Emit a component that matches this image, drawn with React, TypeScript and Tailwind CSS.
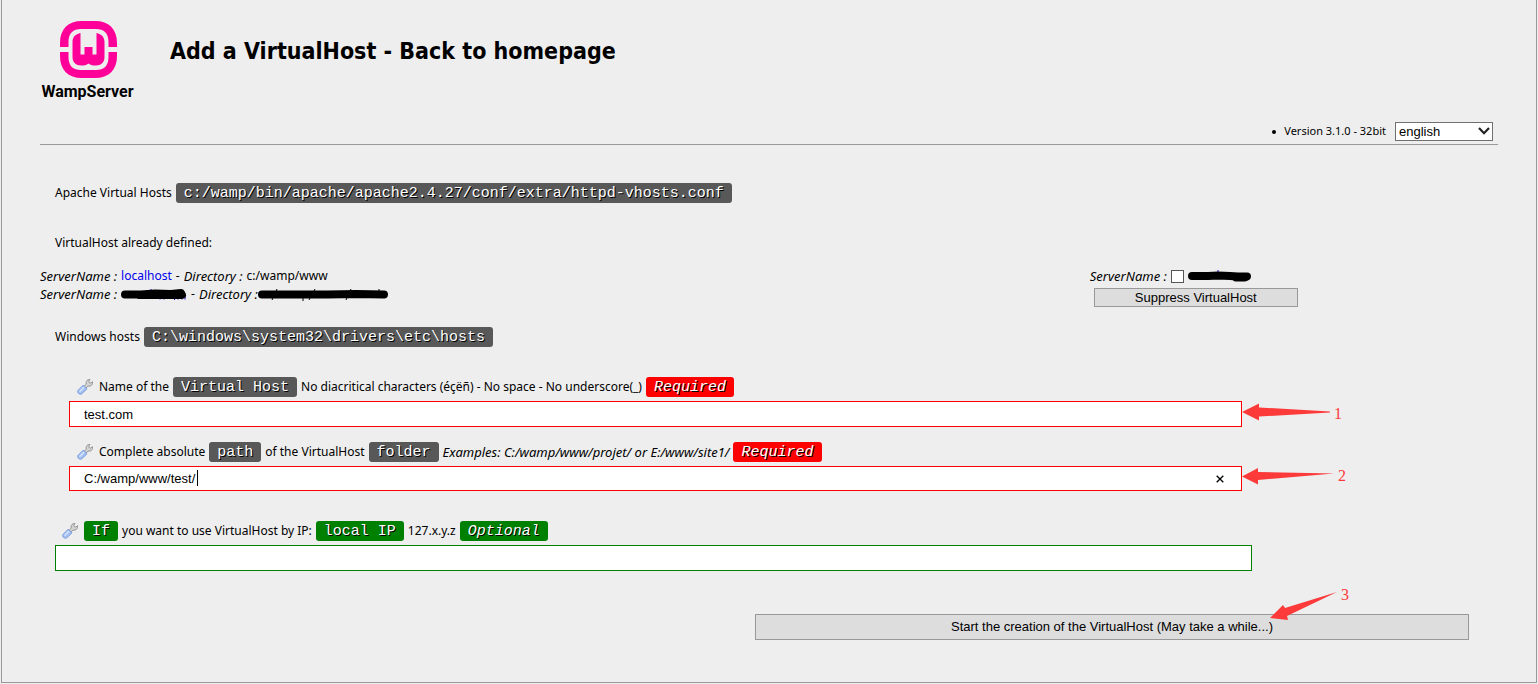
import type { ReactNode } from "react";

type Tone = "gray" | "red" | "green";

const tones: Record<Tone, string> = {
  gray: "bg-[#585858]",
  red: "bg-[#ff0000]",
  green: "bg-[#008000]",
};

function Code({ tone = "gray", italic = false, children }: { tone?: Tone; italic?: boolean; children: ReactNode }) {
  return (
    <code
      className={`${tones[tone]} ${italic ? "italic" : ""} h-5 shrink-0 rounded-[3px] px-2 pt-px font-['Liberation_Mono',monospace] text-[15px] leading-5 whitespace-pre text-white [text-shadow:1px_1px_0_#000]`}
    >
      {children}
    </code>
  );
}

function Wrench() {
  return (
    <svg viewBox="0 0 16 16" className="mr-0.5 size-4 shrink-0" aria-hidden="true">
      <path
        d="M7 7.4 9.3 5.2C8.7 3.4 9.4 1.4 11.2.7L13 .5 11.8 2.2 12.2 3.6 13.6 4.1 15.5 2.7C16 4.8 14.8 6.7 13 7.100L11 7.100 8.9 9.2Z"
        fill="#d4d4d4"
        stroke="#8c8c8c"
        strokeWidth=".9"
        strokeLinejoin="round"
      />
      <path d="M6.300 6.100 10 9.800 5.200 14.500C3 16.400 -.300 14 .9 11.500Z" fill="#a3c0f2" stroke="#7599dc" strokeWidth=".9" strokeLinejoin="round" />
      <path d="M3 12.2 6.600 8.600" stroke="#d3e1fc" strokeWidth="1.600" strokeLinecap="round" />
    </svg>
  );
}

function Logo() {
  return (
    <a href="#" className="flex w-[95px] flex-col items-center text-black">
      <svg viewBox="0 0 57 57" className="ml-px size-[57px]" aria-hidden="true">
        <g fill="#ff0099">
          <path d="M0 26V22C0 8 8 0 22 0H35C49 0 57 8 57 22V26H48.5V21C48.5 12 44 8 36 8H21C13 8 8.5 12 8.5 21V26Z" />
          <path d="M0 31V35C0 49 8 57 22 57H35C49 57 57 49 57 35V31H48.5V36C48.5 45 44 49 36 49H21C13 49 8.5 45 8.5 36V31Z" />
          <path d="M20.500 12V33.500H24.500V26H32.500V33.500H36.500V12C41.5 13 44.5 16 44.5 21V36C44.5 41.5 41 44.5 36 44.5C33 44.5 30.5 44.2 28.5 42.500C26.5 44.2 24 44.5 21 44.5C16 44.5 12.5 41.5 12.5 36V21C12.5 16 15.5 13 20.500 12Z" />
        </g>
      </svg>
      <span className="mt-1 font-[Roboto,sans-serif] text-base leading-5 font-bold">WampServer</span>
    </a>
  );
}

function Scribble({ w, className = "", d, traces, color = "#000" }: { w: number; className?: string; d: string; traces: string; color?: string }) {
  return (
    <svg viewBox={`0 0 ${w} 14`} className={`h-[14px] shrink-0 ${className}`} role="img" aria-label="hidden">
      <path d={traces} stroke={color} strokeWidth="1" fill="none" />
      <path d={d} stroke="#000" strokeWidth="8" strokeLinecap="round" strokeLinejoin="round" fill="none" />
    </svg>
  );
}

function Arrow({ n, points, box, className, numberClass }: { n: number; points: string; box: string; className: string; numberClass: string }) {
  return (
    <div className={`pointer-events-none absolute flex gap-0.5 ${className}`}>
      <svg viewBox={box} className="w-[90px] shrink-0 overflow-visible" aria-hidden="true">
        <polygon points={points} fill="#fd3a3a" />
      </svg>
      <span className={`font-['Liberation_Serif',serif] text-base leading-4 text-[#fd3a3a] ${numberClass}`}>{n}</span>
    </div>
  );
}

const field = "block w-full border bg-white px-[14px] font-['Liberation_Sans',Arial,sans-serif] text-[13px] text-black outline-none";

export default function App() {
  return (
    <div className="bg-[#eee] px-px pb-px font-['Noto_Sans',Tahoma,sans-serif] text-xs text-black">
      <div className="border-x border-b border-[#999] px-[38px] pb-[42px]">
        <header className="border-b border-[#999]">
          <div className="flex items-start pt-[21px]">
            <Logo />
            <h1 className="ml-[35px] pt-3 font-['DejaVu_Sans_Condensed',Tahoma,sans-serif] text-[23px] leading-9 font-bold">
              Add a VirtualHost - <a href="#">Back to homepage</a>
            </h1>
          </div>
          <div className="mt-5 mr-[5px] flex items-center justify-end pb-[3px]">
            <ul className="mr-[9px] flex items-center text-[11px]">
              <li className="flex items-center gap-2">
                <span className="size-1 rounded-full bg-black" />
                Version 3.1.0 - 32bit
              </li>
            </ul>
            <div className="relative">
              <select
                aria-label="Language"
                className="block h-[19px] w-[98px] appearance-none border border-[#707070] bg-white pl-[3px] font-['Liberation_Sans',Arial,sans-serif] text-[13px] leading-4"
              >
                <option>english</option>
              </select>
              <svg viewBox="0 0 12 8" className="pointer-events-none absolute top-[5px] right-[3px] h-2 w-3" aria-hidden="true">
                <path d="M1 1 6 6.2 11 1" fill="none" stroke="#222" strokeWidth="2.2" />
              </svg>
            </div>
          </div>
        </header>

        <main>
          <div className="mt-[38px] flex items-center gap-1 pl-[15px]">
            Apache Virtual Hosts <Code>c:/wamp/bin/apache/apache2.4.27/conf/extra/httpd-vhosts.conf</Code>
          </div>
          <p className="mt-[30px] pl-[15px] leading-5">VirtualHost already defined:</p>

          <div className="mt-[14px] flex">
            <ul className="w-[72%] leading-[18px]">
              <li className="flex items-center gap-1">
                <i className="text-[13px] leading-[18px]">ServerName :</i>
                <a href="#" className="text-[#0000ee]">
                  localhost
                </a>
                - <i className="text-[13px] leading-[18px]">Directory :</i> c:/wamp/www
              </li>
              <li className="flex items-center gap-1">
                <i className="text-[13px] leading-[18px]">ServerName :</i>
                <Scribble
                  w={66}
                  className="w-[66px]"
                  color="#2200cc"
                  d="M4 7.5H20L34 6.5 50 7 60 6 61 8 40 8 18 8"
                  traces="M30 2V5M39 9V12.5M43 9V12.5M53 12.5H54M57 9V12.5M61 9V12.5M64 9V12.5"
                />
                - <i className="text-[13px] leading-[18px]">Directory :</i>
                <Scribble w={130} className="-ml-1 w-[130px]" d="M4 7.5H40L70 7.5 98 7 126 7.5" traces="M14 13 19 2M45 10V14M51 13 57 2M88 13 93 2M121 2V6" />
              </li>
            </ul>
            <div className="w-[14%] leading-[18px]">
              <div className="flex items-center">
                <label htmlFor="del" className="text-[13px] leading-[18px] italic">
                  ServerName :
                </label>
                <input id="del" type="checkbox" className="mx-1 size-[13px] appearance-none border border-[#555] bg-white" />
                <Scribble w={64} className="w-16" color="#2200cc" d="M4 7H20L30 6.5 42 7 50 7.5 59 7.5 57 8.5 48 8.5" traces="M30 1V4" />
              </div>
              <button
                type="button"
                className="mt-[3px] ml-1 block h-[19px] w-full border border-[#999] bg-[#ddd] font-['Liberation_Sans',Arial,sans-serif] text-[13px] leading-4"
              >
                Suppress VirtualHost
              </button>
            </div>
          </div>

          <div className="mt-5 flex items-center gap-1 pl-[15px]">
            Windows hosts <Code>{"C:\\windows\\system32\\drivers\\etc\\hosts"}</Code>
          </div>

          <form className="mt-[30px] px-[15px]" onSubmit={(e) => e.preventDefault()}>
            <div className="mr-[231px]">
              <div className="mr-[10px] ml-[14px]">
                <label htmlFor="name" className="flex items-center gap-1 pl-2">
                  <Wrench />
                  Name of the <Code>Virtual Host</Code> No diacritical characters (éçëñ) - No space - No underscore(_){" "}
                  <Code tone="red" italic>
                    Required
                  </Code>
                </label>
                <div className="relative mt-1">
                  <input id="name" type="text" defaultValue="test.com" className={`${field} h-[26px] border-[#ff0000]`} />
                  <Arrow
                    n={1}
                    box="0 0 90 18"
                    points="0,8.5 17,0 17,4 88,8 88,9 17,13 17,17"
                    className="top-[2px] left-full"
                    numberClass="pt-[3px]"
                  />
                </div>
                <label htmlFor="path" className="mt-[15px] flex items-center gap-1 pl-2">
                  <Wrench />
                  Complete absolute <Code>path</Code> of the VirtualHost <Code>folder</Code>
                  <i className="text-[13px] leading-[18px]">Examples: C:/wamp/www/projet/ or E:/www/site1/</i>
                  <Code tone="red" italic>
                    Required
                  </Code>
                </label>
                <div className="relative mt-1">
                  <input id="path" type="text" defaultValue="C:/wamp/www/test/" className={`${field} h-[25px] border-[#ff0000]`} />
                  <span className="absolute top-1 left-[128px] h-4 w-px bg-black" />
                  <button type="button" aria-label="Clear" className="absolute top-[9px] right-[18px]">
                    <svg viewBox="0 0 8 8" className="size-2" aria-hidden="true">
                      <path d="M.7.7 7.3 7.3M7.3.7.7 7.3" stroke="#000" strokeWidth="1.3" />
                    </svg>
                  </button>
                  <Arrow
                    n={2}
                    box="0 0 90 18"
                    points="0,8.5 16,0 16,4 92,5.5 16,12 16,16.5"
                    className="top-[2px] left-full"
                    numberClass="pl-1"
                  />
                </div>
              </div>

              <label htmlFor="ip" className="mt-[30px] flex items-center gap-1 pl-[7px]">
                <Wrench />
                <Code tone="green">If</Code> you want to use VirtualHost by IP: <Code tone="green">local IP</Code> 127.x.y.z{" "}
                <Code tone="green" italic>
                  Optional
                </Code>
              </label>
              <input id="ip" type="text" className={`${field} mt-1 h-[26px] border-[#008000]`} />
            </div>

            <div className="relative mt-[43px] mr-[14px] ml-auto w-1/2">
              <button
                type="submit"
                className="block h-[26px] w-full border border-[#999] bg-[#ddd] font-['Liberation_Sans',Arial,sans-serif] text-[13px]"
              >
                Start the creation of the VirtualHost (May take a while...)
              </button>
              <Arrow
                n={3}
                box="0 0 90 36"
                points="0,28 13,15 15,18 67,2 17,26 18,30"
                className="-top-[24px] right-[120px]"
                numberClass="-ml-[21px] -mt-[3px]"
              />
            </div>
          </form>
        </main>
      </div>
    </div>
  );
}
